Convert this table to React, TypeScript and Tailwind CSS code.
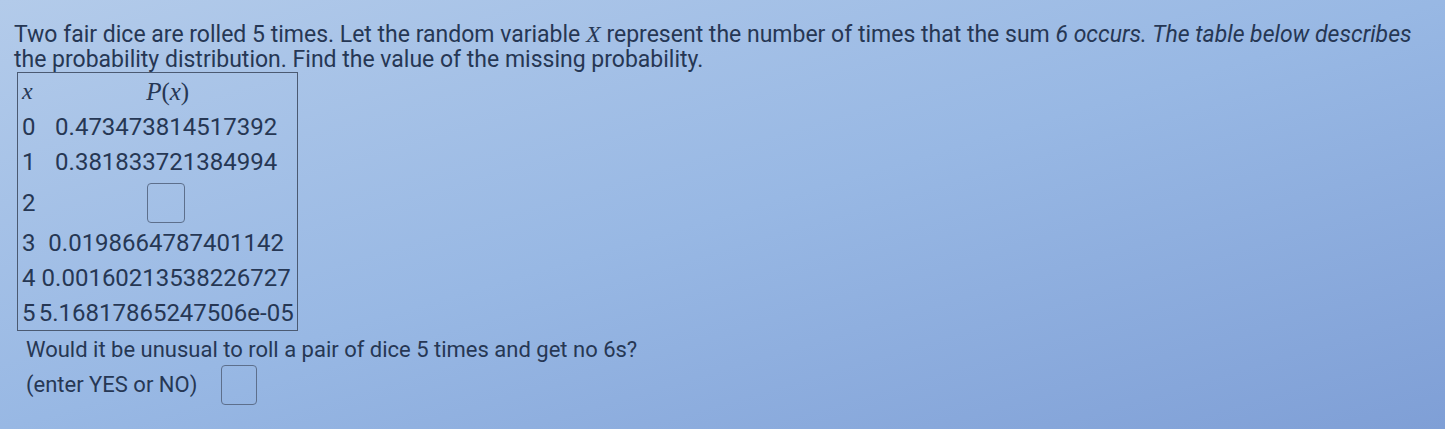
import React from 'react';

const rows: { x: string; p: string | null }[] = [
  { x: '0', p: '0.473473814517392' },
  { x: '1', p: '0.381833721384994' },
  { x: '2', p: null },
  { x: '3', p: '0.0198664787401142' },
  { x: '4', p: '0.00160213538226727' },
  { x: '5', p: '5.16817865247506e-05' },
];

function Blank({ className }: { className: string }) {
  return <span className={`inline-block rounded-[4px] border-[1.5px] border-[#5d6f8c] ${className}`} />;
}

export default function App() {
  return (
    <div className="w-[1445px] h-[429px] overflow-hidden bg-gradient-to-br from-[#b3cbea] via-[#98b8e4] to-[#7f9fd6] text-[#263754] font-['Roboto',sans-serif]">
      <div className="pl-[14px] pt-[22px] pr-[20px]">
        <p className="text-[23px] leading-[25px] whitespace-nowrap">
          Two fair dice are rolled 5 times. Let the random variable{' '}
          <span className="font-['Liberation_Serif',serif] italic text-[24px]">X</span> represent the number of
          times that the sum <span className="italic">6 occurs. The table below describes</span>
          <br />
          the probability distribution. Find the value of the missing probability.
        </p>

        <table className="ml-[3px] border border-[#4b5a72] text-[24px] leading-none">
          <tbody>
            <tr className="h-[37px]">
              <td className="pl-[4px] pr-[6px] align-middle font-['Liberation_Serif',serif] italic">x</td>
              <td className="text-center font-['Liberation_Serif',serif] text-[25px]">
                <span className="italic">P</span>(<span className="italic">x</span>)
              </td>
            </tr>
            {rows.map((r) => (
              <tr key={r.x} className={r.p ? 'h-[35px]' : 'h-[46px]'}>
                <td className="pl-[4px] pr-[3px] align-middle">{r.x}</td>
                <td className="pr-[3px] text-center align-middle">
                  {r.p ? r.p : <Blank className="w-[38px] h-[40px] align-middle" />}
                </td>
              </tr>
            ))}
          </tbody>
        </table>

        <div className="pl-[12px] pt-[6px] text-[22px] leading-[26px]">
          <p>Would it be unusual to roll a pair of dice 5 times and get no 6s?</p>
          <div className="mt-[2px] flex items-center gap-[24px]">
            <span>(enter YES or NO)</span>
            <Blank className="w-[36px] h-[40px]" />
          </div>
        </div>
      </div>
    </div>
  );
}
